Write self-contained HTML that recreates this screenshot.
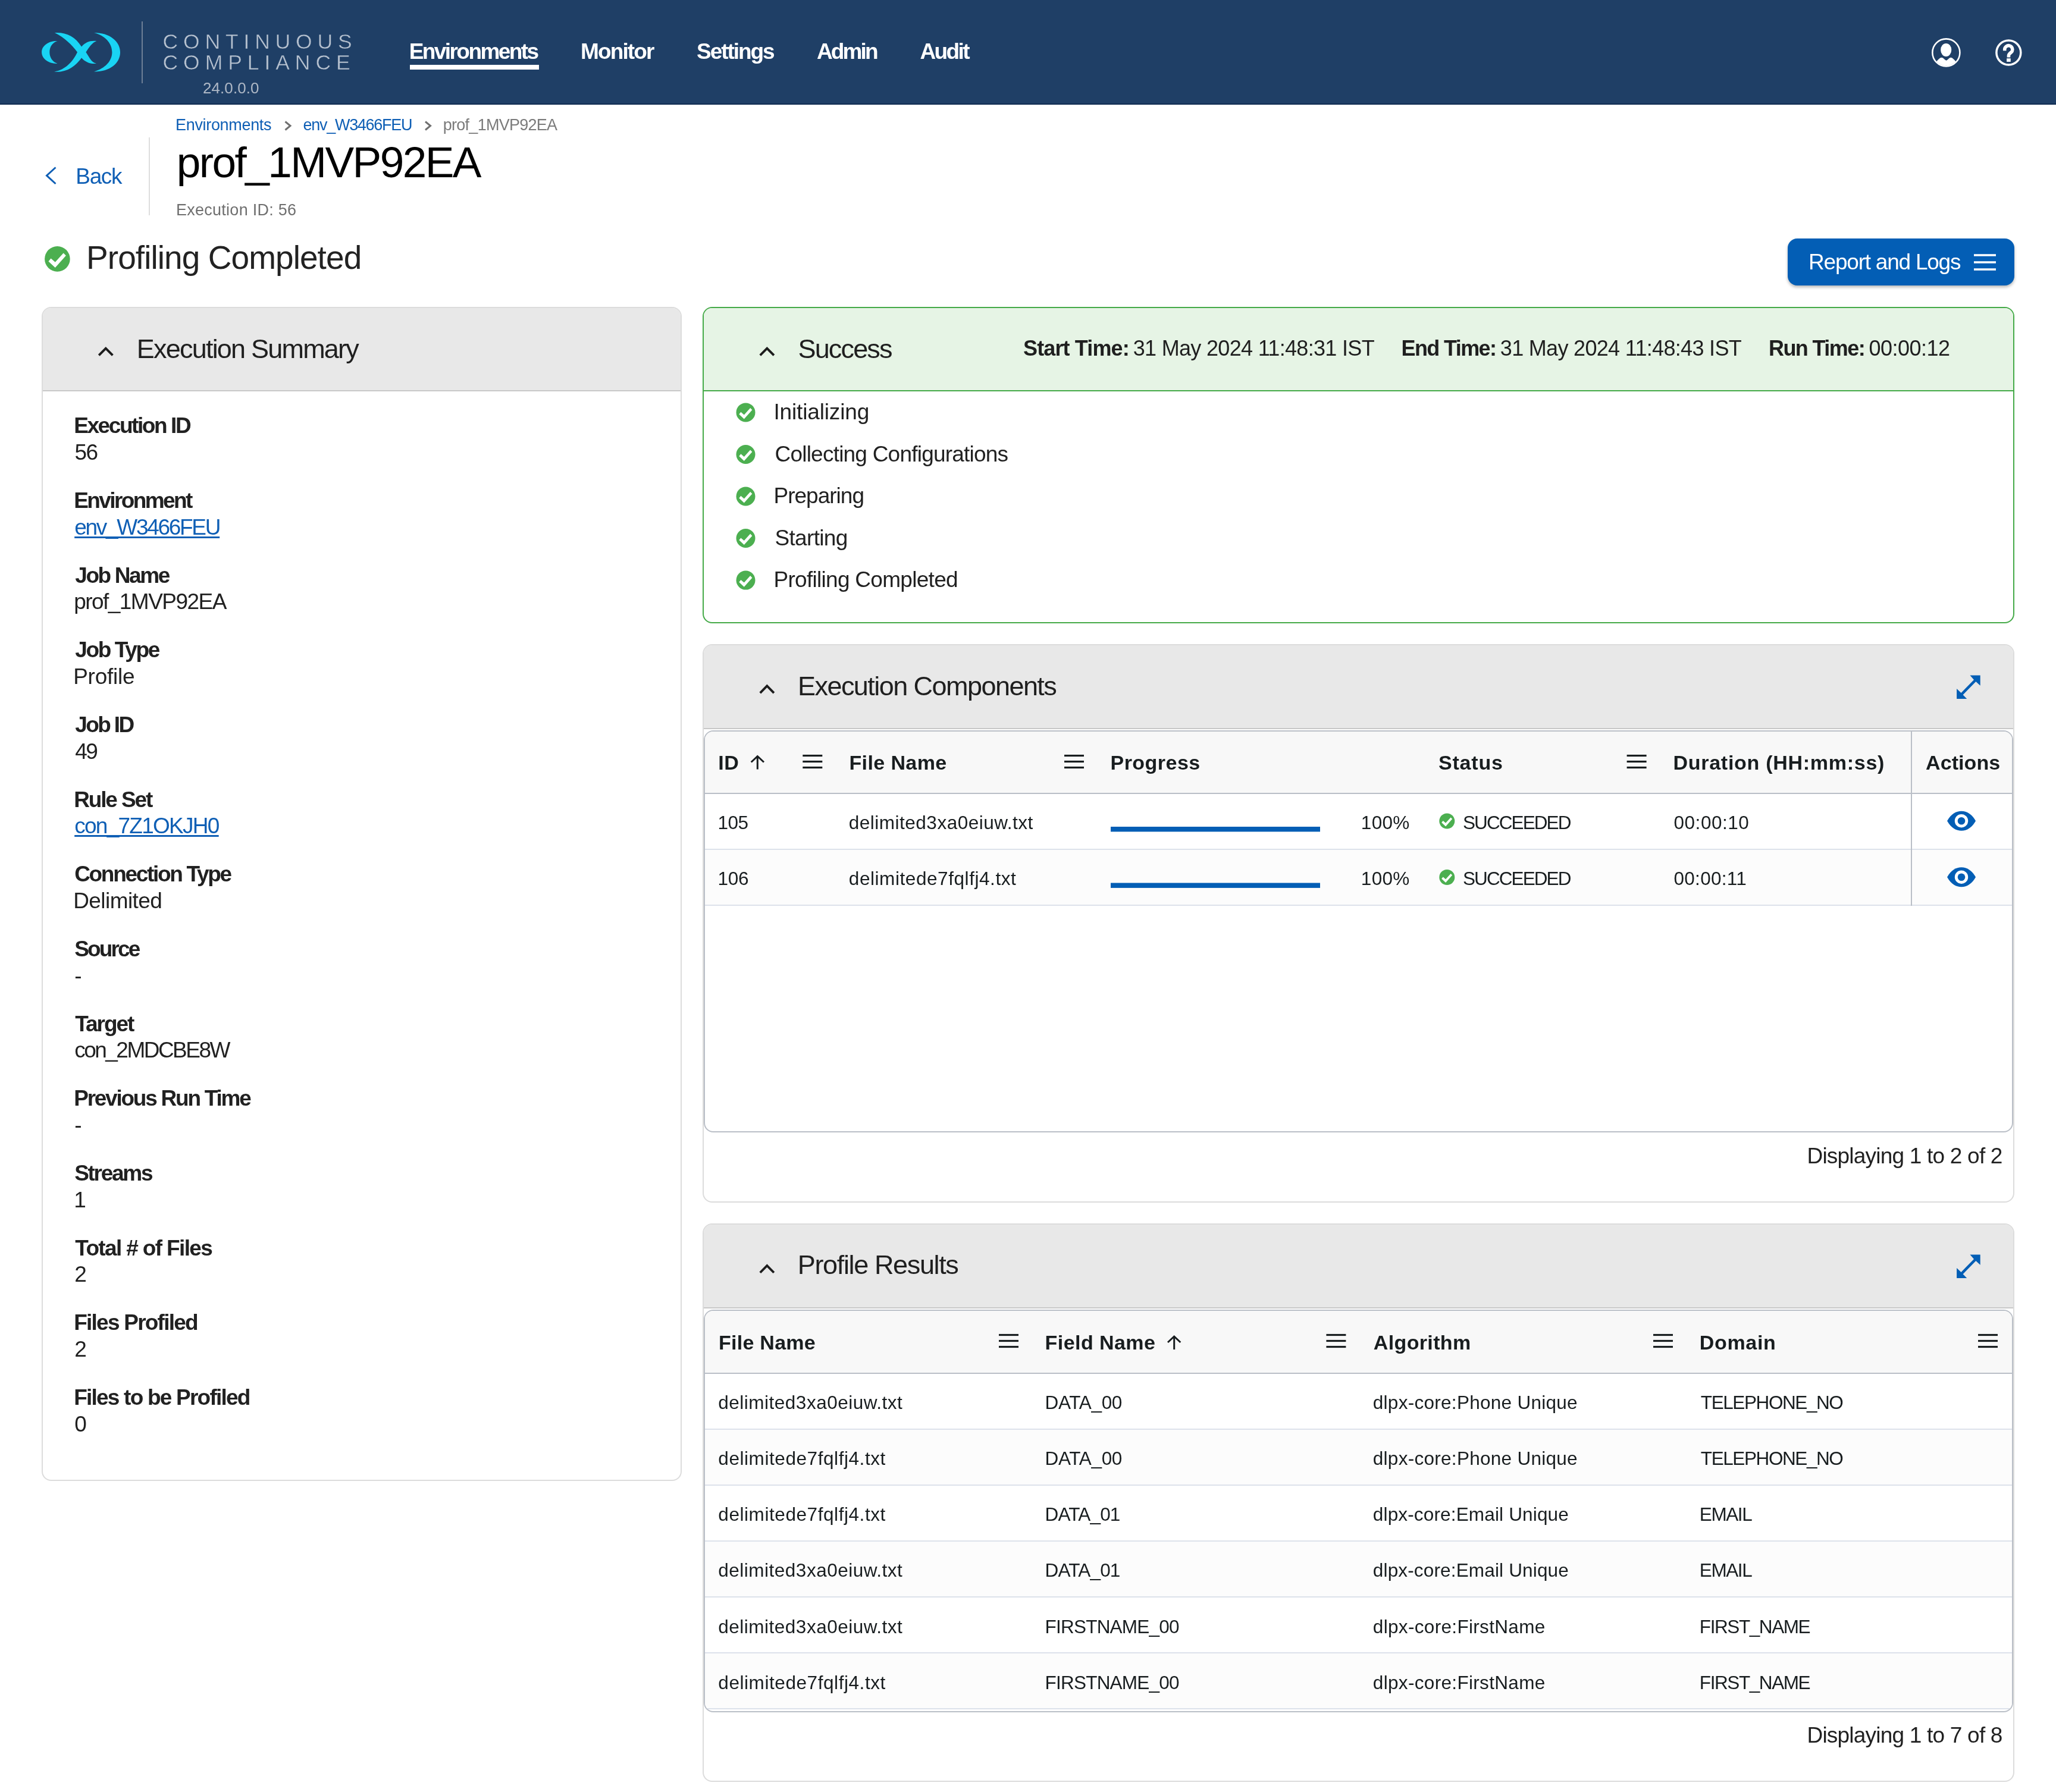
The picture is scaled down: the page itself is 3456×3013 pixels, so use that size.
<!DOCTYPE html>
<html><head><meta charset="utf-8"><title>prof_1MVP92EA</title>
<style>
html,body{margin:0;padding:0;background:#fff;width:3456px;height:3013px;overflow:hidden;position:relative}
body{font-family:"Liberation Sans",sans-serif}
.t{position:absolute;white-space:nowrap;z-index:5}
.tl{position:absolute;left:0;top:0;width:3456px;height:3013px;z-index:7;will-change:transform}
.ov{position:absolute;left:0;top:0;z-index:6}
.hdr{position:absolute;left:0;top:0;width:3456px;height:174px;background:#1f3f66;border-bottom:2px solid #112d52}
.box{position:absolute;box-sizing:border-box;border:2px solid #dcdcdc;border-radius:16px;overflow:hidden;background:#fff}
.phead{position:absolute;left:0;top:0;right:0;background:#e8e8e8;border-bottom:2px solid #c8c8c8}
.grid{position:absolute;box-sizing:border-box;border:2px solid #babfc7;border-radius:16px;overflow:hidden;background:#fff}
.gheadr{position:absolute;left:0;top:0;right:0;background:#f8f8f8;border-bottom:2px solid #babfc7}
.row{position:absolute;left:0;right:0}
.sep{position:absolute;left:0;right:0;height:2px;background:#dde2eb}
</style></head><body>
<div class="hdr"></div>
<div style="position:absolute;left:238px;top:36px;width:2px;height:104px;background:#6e7f97"></div>
<div style="position:absolute;left:689px;top:109px;width:217px;height:8px;background:#fff"></div>
<div style="position:absolute;left:250px;top:231px;width:2px;height:131px;background:#dedede"></div>
<div style="position:absolute;left:3005px;top:401px;width:381px;height:79px;border-radius:16px;background:#035eb5;box-shadow:0 3px 5px rgba(0,0,0,.28)"></div>
<div class="box" style="left:70px;top:516px;width:1076px;height:1974px;border-color:#dcdcdc"><div class="phead" style="height:138px;background:#e8e8e8;border-bottom-color:#c8c8c8"></div></div><div class="box" style="left:1181px;top:516px;width:2205px;height:532px;border-color:#45aa48"><div class="phead" style="height:138px;background:#e6f4e5;border-bottom-color:#45aa48"></div></div><div class="box" style="left:1181px;top:1083px;width:2205px;height:939px;border-color:#dcdcdc"><div class="phead" style="height:139px;background:#e8e8e8;border-bottom-color:#c8c8c8"></div></div><div class="grid" style="left:1183px;top:1228px;width:2201px;height:676px"><div class="gheadr" style="height:103px"></div><div class="row" style="top:105px;height:92px;background:#ffffff"></div><div class="sep" style="top:197px"></div><div class="row" style="top:199px;height:92px;background:#fcfcfc"></div><div class="sep" style="top:291px"></div><div style="position:absolute;left:2027px;top:0;width:2px;height:293px;background:#babfc7"></div></div><div class="box" style="left:1181px;top:2057px;width:2205px;height:939px;border-color:#dcdcdc"><div class="phead" style="height:139px;background:#e8e8e8;border-bottom-color:#c8c8c8"></div></div><div class="grid" style="left:1183px;top:2202px;width:2201px;height:677px"><div class="gheadr" style="height:104px"></div><div class="row" style="top:106px;height:92px;background:#ffffff"></div><div class="sep" style="top:198px"></div><div class="row" style="top:200px;height:92px;background:#fcfcfc"></div><div class="sep" style="top:292px"></div><div class="row" style="top:294px;height:92px;background:#ffffff"></div><div class="sep" style="top:386px"></div><div class="row" style="top:388px;height:92px;background:#fcfcfc"></div><div class="sep" style="top:480px"></div><div class="row" style="top:482px;height:92px;background:#ffffff"></div><div class="sep" style="top:574px"></div><div class="row" style="top:576px;height:92px;background:#fcfcfc"></div><div class="sep" style="top:668px"></div></div>
<svg class="ov" width="3456" height="3013" viewBox="0 0 3456 3013"><g transform="translate(60,45) scale(0.0778210)"><path fill="#19d4f4" d="M470,310 C300,300 130,400 130,550 C130,700 300,805 470,795 C360,760 300,660 300,550 C300,440 360,340 470,310 Z"/><path fill="#19d4f4" d="M1260,130 C1600,130 1825,320 1825,550 C1825,790 1600,975 1260,970 C1500,900 1650,740 1650,550 C1650,360 1500,190 1260,130 Z"/><path fill="#19d4f4" d="M410,130 C660,115 850,210 990,430 C1080,330 1180,295 1315,310 C1220,340 1150,450 1085,550 C1160,660 1200,770 1310,795 C1180,810 1070,760 990,670 C860,850 680,990 400,972 C640,930 800,760 900,550 C790,400 620,230 410,130 Z"/></g><defs><clipPath id="uc"><circle cx="3271.35" cy="88.4" r="22"/></clipPath></defs><circle cx="3271.35" cy="88.4" r="23.05" fill="none" stroke="#fff" stroke-width="2.6"/><ellipse cx="3271.2" cy="83.9" rx="9.05" ry="11" fill="#fff"/><path clip-path="url(#uc)" d="M3254.5,104.2 C3258,100 3261,96.8 3263.6,96.8 C3266.2,96.8 3269,100.6 3271.6,101.8 C3274.2,100.6 3276.9,96.8 3279.1,96.8 C3281.7,96.8 3284.6,100 3288.4,104.4 L3300,130 L3240,130 Z" fill="#fff"/><circle cx="3376.35" cy="88.45" r="20.45" fill="none" stroke="#fff" stroke-width="3.5"/><path d="M3369.7,85.2 L3369.7,82.8 A6.6,6.6 0 1 1 3382.3,86 C3381,88.6 3376.45,90 3376.45,93.5 L3376.45,96.6" fill="none" stroke="#fff" stroke-width="5.6"/><rect x="3373.1" y="98.2" width="6.7" height="5.7" fill="#fff"/><path d="M479.5,204.5 L488.0,211.5 L479.5,218.5" fill="none" stroke="#707070" stroke-width="3"/><path d="M715,204.5 L723.5,211.5 L715,218.5" fill="none" stroke="#707070" stroke-width="3"/><path d="M93.5,281.5 L78.5,295.2 L93.5,309" fill="none" stroke="#0f5fb5" stroke-width="3"/><circle cx="96.4" cy="435.4" r="21.3" fill="#4caf50"/><polygon points="81.49,439.45 85.54,434.55 92.78,440.72 106.62,425.39 110.88,429.86 92.78,450.10" fill="#fff"/><rect x="3318" y="427.25" width="37" height="3.5" fill="#fff"/><rect x="3318" y="439.25" width="37" height="3.5" fill="#fff"/><rect x="3318" y="451.25" width="37" height="3.5" fill="#fff"/><polygon points="177.8,582.9 190.8,596.1 188.0,598.8 177.8,588.5 167.6,598.8 164.9,596.1" fill="#1c1c1c"/><polygon points="1289.3,582.9 1302.3,596.1 1299.5,598.8 1289.3,588.5 1279.1,598.8 1276.4,596.1" fill="#1c1c1c"/><polygon points="1289.3,1150.5 1302.3,1163.7 1299.5,1166.4 1289.3,1156.1 1279.1,1166.4 1276.4,1163.7" fill="#1c1c1c"/><polygon points="1289.3,2125.2 1302.3,2138.4 1299.5,2141.1 1289.3,2130.8 1279.1,2141.1 1276.4,2138.4" fill="#1c1c1c"/><circle cx="1253.5" cy="693.4" r="16" fill="#4caf50"/><polygon points="1242.30,696.44 1245.34,692.76 1250.78,697.40 1261.18,685.88 1264.38,689.24 1250.78,704.44" fill="#fff"/><circle cx="1253.5" cy="763.9499999999999" r="16" fill="#4caf50"/><polygon points="1242.30,766.99 1245.34,763.31 1250.78,767.95 1261.18,756.43 1264.38,759.79 1250.78,774.99" fill="#fff"/><circle cx="1253.5" cy="834.5" r="16" fill="#4caf50"/><polygon points="1242.30,837.54 1245.34,833.86 1250.78,838.50 1261.18,826.98 1264.38,830.34 1250.78,845.54" fill="#fff"/><circle cx="1253.5" cy="905.05" r="16" fill="#4caf50"/><polygon points="1242.30,908.09 1245.34,904.41 1250.78,909.05 1261.18,897.53 1264.38,900.89 1250.78,916.09" fill="#fff"/><circle cx="1253.5" cy="975.5999999999999" r="16" fill="#4caf50"/><polygon points="1242.30,978.64 1245.34,974.96 1250.78,979.60 1261.18,968.08 1264.38,971.44 1250.78,986.64" fill="#fff"/><polygon points="3311.5,1135.6 3328.7,1135.6 3328.7,1152.8 3321.3,1146.0 3299.6,1168.2 3306.2,1175.1 3289.1,1175.1 3289.1,1157.9 3296.5,1164.9 3318.0,1143.0" fill="#035eb5"/><polygon points="3311.5,2109.6 3328.7,2109.6 3328.7,2126.8 3321.3,2120.0 3299.6,2142.2 3306.2,2149.1 3289.1,2149.1 3289.1,2131.9 3296.5,2138.9 3318.0,2117.0" fill="#035eb5"/><path d="M1273.3,1293.5 L1273.3,1272.0 M1262.7,1281.5 L1273.3,1271.5 L1284.0,1281.5" stroke="#181d1f" stroke-width="3" fill="none"/><rect x="1349.3" y="1268.90" width="33" height="3.2" fill="#181d1f"/><rect x="1349.3" y="1278.90" width="33" height="3.2" fill="#181d1f"/><rect x="1349.3" y="1288.90" width="33" height="3.2" fill="#181d1f"/><rect x="1789" y="1268.90" width="33" height="3.2" fill="#181d1f"/><rect x="1789" y="1278.90" width="33" height="3.2" fill="#181d1f"/><rect x="1789" y="1288.90" width="33" height="3.2" fill="#181d1f"/><rect x="2734.6" y="1268.90" width="33" height="3.2" fill="#181d1f"/><rect x="2734.6" y="1278.90" width="33" height="3.2" fill="#181d1f"/><rect x="2734.6" y="1288.90" width="33" height="3.2" fill="#181d1f"/><rect x="1867" y="1390.0" width="352" height="8.4" fill="#035eb5"/><circle cx="2432.3" cy="1380.5" r="13" fill="#4caf50"/><polygon points="2423.20,1382.97 2425.67,1379.98 2430.09,1383.75 2438.54,1374.39 2441.14,1377.12 2430.09,1389.47" fill="#fff"/><path d="M3273,1380.2 C3280,1368.2 3288,1363.7 3297,1363.7 C3306,1363.7 3314,1368.2 3321,1380.2 C3314,1392.2 3306,1396.7 3297,1396.7 C3288,1396.7 3280,1392.2 3273,1380.2 Z" fill="#035eb5"/><circle cx="3297" cy="1380.2" r="11.2" fill="#fff"/><circle cx="3297" cy="1380.2" r="6.3" fill="#035eb5"/><rect x="1867" y="1484.5" width="352" height="8.4" fill="#035eb5"/><circle cx="2432.3" cy="1475.0" r="13" fill="#4caf50"/><polygon points="2423.20,1477.47 2425.67,1474.48 2430.09,1478.25 2438.54,1468.89 2441.14,1471.62 2430.09,1483.97" fill="#fff"/><path d="M3273,1474.7 C3280,1462.7 3288,1458.2 3297,1458.2 C3306,1458.2 3314,1462.7 3321,1474.7 C3314,1486.7 3306,1491.2 3297,1491.2 C3288,1491.2 3280,1486.7 3273,1474.7 Z" fill="#035eb5"/><circle cx="3297" cy="1474.7" r="11.2" fill="#fff"/><circle cx="3297" cy="1474.7" r="6.3" fill="#035eb5"/><path d="M1973.7,2269.0 L1973.7,2247.5 M1963.0,2257.0 L1973.7,2247.0 L1984.3,2257.0" stroke="#181d1f" stroke-width="3" fill="none"/><rect x="1679" y="2242.90" width="33" height="3.2" fill="#181d1f"/><rect x="1679" y="2252.90" width="33" height="3.2" fill="#181d1f"/><rect x="1679" y="2262.90" width="33" height="3.2" fill="#181d1f"/><rect x="2229.4" y="2242.90" width="33" height="3.2" fill="#181d1f"/><rect x="2229.4" y="2252.90" width="33" height="3.2" fill="#181d1f"/><rect x="2229.4" y="2262.90" width="33" height="3.2" fill="#181d1f"/><rect x="2779" y="2242.90" width="33" height="3.2" fill="#181d1f"/><rect x="2779" y="2252.90" width="33" height="3.2" fill="#181d1f"/><rect x="2779" y="2262.90" width="33" height="3.2" fill="#181d1f"/><rect x="3325" y="2242.90" width="33" height="3.2" fill="#181d1f"/><rect x="3325" y="2252.90" width="33" height="3.2" fill="#181d1f"/><rect x="3325" y="2262.90" width="33" height="3.2" fill="#181d1f"/></svg>
<div class="tl">
<div class="t" style="left:273.5px;top:52.5px;font-size:35.5px;line-height:35.5px;letter-spacing:8.84px;color:#b6c1cf;-webkit-text-stroke:0.5px #1f3f66;">CONTINUOUS</div>
<div class="t" style="left:273.5px;top:87.8px;font-size:35.5px;line-height:35.5px;letter-spacing:8.94px;color:#b6c1cf;-webkit-text-stroke:0.5px #1f3f66;">COMPLIANCE</div>
<div class="t" style="left:341.0px;top:134.6px;font-size:26px;line-height:26px;letter-spacing:0.07px;color:#aeb8c6;">24.0.0.0</div>
<div class="t" style="left:687.7px;top:67.5px;font-size:37px;line-height:37px;letter-spacing:-2.57px;color:#ffffff;font-weight:700;">Environments</div>
<div class="t" style="left:976.0px;top:67.5px;font-size:37px;line-height:37px;letter-spacing:-1.87px;color:#ffffff;font-weight:700;">Monitor</div>
<div class="t" style="left:1171.0px;top:67.5px;font-size:37px;line-height:37px;letter-spacing:-2.05px;color:#ffffff;font-weight:700;">Settings</div>
<div class="t" style="left:1373.0px;top:67.5px;font-size:37px;line-height:37px;letter-spacing:-2.88px;color:#ffffff;font-weight:700;">Admin</div>
<div class="t" style="left:1546.4px;top:67.5px;font-size:37px;line-height:37px;letter-spacing:-2.58px;color:#ffffff;font-weight:700;">Audit</div>
<div class="t" style="left:295.0px;top:197.0px;font-size:27px;line-height:27px;letter-spacing:-0.32px;color:#0f5fb5;">Environments</div>
<div class="t" style="left:509.5px;top:197.0px;font-size:27px;line-height:27px;letter-spacing:-1.28px;color:#0f5fb5;">env_W3466FEU</div>
<div class="t" style="left:744.8px;top:197.0px;font-size:27px;line-height:27px;letter-spacing:-0.74px;color:#7b7b7b;">prof_1MVP92EA</div>
<div class="t" style="left:127.3px;top:277.7px;font-size:37px;line-height:37px;letter-spacing:-1.35px;color:#0f5fb5;">Back</div>
<div class="t" style="left:296.7px;top:235.7px;font-size:73px;line-height:73px;letter-spacing:-2.58px;color:#000000;">prof_1MVP92EA</div>
<div class="t" style="left:296.0px;top:339.8px;font-size:27px;line-height:27px;letter-spacing:0.26px;color:#6f6f6f;">Execution ID: 56</div>
<div class="t" style="left:145.0px;top:406.0px;font-size:55px;line-height:55px;letter-spacing:-0.93px;color:#222222;">Profiling Completed</div>
<div class="t" style="left:3040.1px;top:421.5px;font-size:37px;line-height:37px;letter-spacing:-1.23px;color:#ffffff;">Report and Logs</div>
<div class="t" style="left:229.8px;top:563.6px;font-size:45px;line-height:45px;letter-spacing:-1.79px;color:#1f1f1f;">Execution Summary</div>
<div class="t" style="left:124.2px;top:697.4px;font-size:37px;line-height:37px;letter-spacing:-2.42px;color:#212121;font-weight:700;">Execution ID</div>
<div class="t" style="left:125.5px;top:742.0px;font-size:37px;line-height:37px;letter-spacing:-1.63px;color:#212121;">56</div>
<div class="t" style="left:124.2px;top:823.1px;font-size:37px;line-height:37px;letter-spacing:-2.60px;color:#212121;font-weight:700;">Environment</div>
<div class="t" style="left:125.2px;top:867.7px;font-size:37px;line-height:37px;letter-spacing:-2.29px;color:#0f5fb5;text-decoration:underline;text-decoration-thickness:2.5px;text-underline-offset:3px;text-decoration-skip-ink:none;">env_W3466FEU</div>
<div class="t" style="left:126.2px;top:948.7px;font-size:37px;line-height:37px;letter-spacing:-2.39px;color:#212121;font-weight:700;">Job Name</div>
<div class="t" style="left:124.2px;top:993.3px;font-size:37px;line-height:37px;letter-spacing:-1.54px;color:#212121;">prof_1MVP92EA</div>
<div class="t" style="left:126.2px;top:1074.4px;font-size:37px;line-height:37px;letter-spacing:-2.36px;color:#212121;font-weight:700;">Job Type</div>
<div class="t" style="left:123.2px;top:1119.0px;font-size:37px;line-height:37px;letter-spacing:-0.25px;color:#212121;">Profile</div>
<div class="t" style="left:126.2px;top:1200.0px;font-size:37px;line-height:37px;letter-spacing:-2.61px;color:#212121;font-weight:700;">Job ID</div>
<div class="t" style="left:126.2px;top:1244.6px;font-size:37px;line-height:37px;letter-spacing:-2.48px;color:#212121;">49</div>
<div class="t" style="left:124.2px;top:1325.7px;font-size:37px;line-height:37px;letter-spacing:-2.14px;color:#212121;font-weight:700;">Rule Set</div>
<div class="t" style="left:125.2px;top:1370.3px;font-size:37px;line-height:37px;letter-spacing:-1.73px;color:#0f5fb5;text-decoration:underline;text-decoration-thickness:2.5px;text-underline-offset:3px;text-decoration-skip-ink:none;">con_7Z1OKJH0</div>
<div class="t" style="left:125.2px;top:1451.4px;font-size:37px;line-height:37px;letter-spacing:-2.32px;color:#212121;font-weight:700;">Connection Type</div>
<div class="t" style="left:123.2px;top:1496.0px;font-size:37px;line-height:37px;letter-spacing:-0.57px;color:#212121;">Delimited</div>
<div class="t" style="left:125.2px;top:1577.0px;font-size:37px;line-height:37px;letter-spacing:-2.87px;color:#212121;font-weight:700;">Source</div>
<div class="t" style="left:125.2px;top:1621.6px;font-size:37px;line-height:37px;letter-spacing:-1.63px;color:#212121;">-</div>
<div class="t" style="left:126.2px;top:1702.7px;font-size:37px;line-height:37px;letter-spacing:-2.02px;color:#212121;font-weight:700;">Target</div>
<div class="t" style="left:125.2px;top:1747.3px;font-size:37px;line-height:37px;letter-spacing:-2.52px;color:#212121;">con_2MDCBE8W</div>
<div class="t" style="left:124.2px;top:1828.3px;font-size:37px;line-height:37px;letter-spacing:-2.24px;color:#212121;font-weight:700;">Previous Run Time</div>
<div class="t" style="left:125.2px;top:1872.9px;font-size:37px;line-height:37px;letter-spacing:-1.63px;color:#212121;">-</div>
<div class="t" style="left:125.2px;top:1954.0px;font-size:37px;line-height:37px;letter-spacing:-2.29px;color:#212121;font-weight:700;">Streams</div>
<div class="t" style="left:124.2px;top:1998.6px;font-size:37px;line-height:37px;letter-spacing:-1.63px;color:#212121;">1</div>
<div class="t" style="left:126.2px;top:2079.7px;font-size:37px;line-height:37px;letter-spacing:-1.64px;color:#212121;font-weight:700;">Total # of Files</div>
<div class="t" style="left:125.2px;top:2124.3px;font-size:37px;line-height:37px;letter-spacing:-1.63px;color:#212121;">2</div>
<div class="t" style="left:124.2px;top:2205.3px;font-size:37px;line-height:37px;letter-spacing:-1.76px;color:#212121;font-weight:700;">Files Profiled</div>
<div class="t" style="left:125.2px;top:2249.9px;font-size:37px;line-height:37px;letter-spacing:-1.63px;color:#212121;">2</div>
<div class="t" style="left:124.2px;top:2331.0px;font-size:37px;line-height:37px;letter-spacing:-1.78px;color:#212121;font-weight:700;">Files to be Profiled</div>
<div class="t" style="left:125.2px;top:2375.6px;font-size:37px;line-height:37px;letter-spacing:-1.63px;color:#212121;">0</div>
<div class="t" style="left:1341.5px;top:563.6px;font-size:45px;line-height:45px;letter-spacing:-1.84px;color:#1f1f1f;">Success</div>
<div class="t" style="left:1720.0px;top:567.5px;font-size:36px;line-height:36px;letter-spacing:-0.87px;color:#1f1f1f;font-weight:700;">Start Time:</div>
<div class="t" style="left:1904.7px;top:567.5px;font-size:36px;line-height:36px;letter-spacing:-0.68px;color:#1f1f1f;">31 May 2024 11:48:31 IST</div>
<div class="t" style="left:2355.5px;top:567.5px;font-size:36px;line-height:36px;letter-spacing:-1.61px;color:#1f1f1f;font-weight:700;">End Time:</div>
<div class="t" style="left:2521.8px;top:567.5px;font-size:36px;line-height:36px;letter-spacing:-0.68px;color:#1f1f1f;">31 May 2024 11:48:43 IST</div>
<div class="t" style="left:2973.0px;top:567.5px;font-size:36px;line-height:36px;letter-spacing:-1.59px;color:#1f1f1f;font-weight:700;">Run Time:</div>
<div class="t" style="left:3141.6px;top:567.5px;font-size:36px;line-height:36px;letter-spacing:-0.53px;color:#1f1f1f;">00:00:12</div>
<div class="t" style="left:1300.5px;top:674.0px;font-size:37px;line-height:37px;letter-spacing:-0.16px;color:#212121;">Initializing</div>
<div class="t" style="left:1302.5px;top:744.5px;font-size:37px;line-height:37px;letter-spacing:-0.78px;color:#212121;">Collecting Configurations</div>
<div class="t" style="left:1300.5px;top:815.1px;font-size:37px;line-height:37px;letter-spacing:-0.99px;color:#212121;">Preparing</div>
<div class="t" style="left:1302.5px;top:885.6px;font-size:37px;line-height:37px;letter-spacing:-0.68px;color:#212121;">Starting</div>
<div class="t" style="left:1300.5px;top:956.2px;font-size:37px;line-height:37px;letter-spacing:-0.71px;color:#212121;">Profiling Completed</div>
<div class="t" style="left:1341.0px;top:1130.6px;font-size:45px;line-height:45px;letter-spacing:-1.55px;color:#1f1f1f;">Execution Components</div>
<div class="t" style="left:1207.2px;top:1264.7px;font-size:34px;line-height:34px;letter-spacing:0.65px;color:#181d1f;font-weight:700;">ID</div>
<div class="t" style="left:1427.4px;top:1264.7px;font-size:34px;line-height:34px;letter-spacing:0.40px;color:#181d1f;font-weight:700;">File Name</div>
<div class="t" style="left:1866.5px;top:1264.7px;font-size:34px;line-height:34px;letter-spacing:0.47px;color:#181d1f;font-weight:700;">Progress</div>
<div class="t" style="left:2418.0px;top:1264.7px;font-size:34px;line-height:34px;letter-spacing:0.80px;color:#181d1f;font-weight:700;">Status</div>
<div class="t" style="left:2812.5px;top:1264.7px;font-size:34px;line-height:34px;letter-spacing:0.72px;color:#181d1f;font-weight:700;">Duration (HH:mm:ss)</div>
<div class="t" style="left:3237.1px;top:1264.7px;font-size:34px;line-height:34px;letter-spacing:0.06px;color:#181d1f;font-weight:700;">Actions</div>
<div class="t" style="left:1206.5px;top:1367.8px;font-size:31.5px;line-height:31.5px;letter-spacing:-0.57px;color:#181d1f;">105</div>
<div class="t" style="left:1426.8px;top:1367.8px;font-size:31.5px;line-height:31.5px;letter-spacing:0.50px;color:#181d1f;">delimited3xa0eiuw.txt</div>
<div class="t" style="left:2287.8px;top:1367.8px;font-size:31.5px;line-height:31.5px;letter-spacing:0.31px;color:#181d1f;">100%</div>
<div class="t" style="left:2459.0px;top:1367.8px;font-size:31.5px;line-height:31.5px;letter-spacing:-1.92px;color:#181d1f;">SUCCEEDED</div>
<div class="t" style="left:2813.5px;top:1367.8px;font-size:31.5px;line-height:31.5px;letter-spacing:0.53px;color:#181d1f;">00:00:10</div>
<div class="t" style="left:1206.5px;top:1461.8px;font-size:31.5px;line-height:31.5px;letter-spacing:-0.27px;color:#181d1f;">106</div>
<div class="t" style="left:1426.8px;top:1461.8px;font-size:31.5px;line-height:31.5px;letter-spacing:0.57px;color:#181d1f;">delimitede7fqlfj4.txt</div>
<div class="t" style="left:2287.8px;top:1461.8px;font-size:31.5px;line-height:31.5px;letter-spacing:0.31px;color:#181d1f;">100%</div>
<div class="t" style="left:2459.0px;top:1461.8px;font-size:31.5px;line-height:31.5px;letter-spacing:-1.92px;color:#181d1f;">SUCCEEDED</div>
<div class="t" style="left:2813.5px;top:1461.8px;font-size:31.5px;line-height:31.5px;letter-spacing:0.29px;color:#181d1f;">00:00:11</div>
<div class="t" style="left:3037.5px;top:1925.1px;font-size:37px;line-height:37px;letter-spacing:-0.79px;color:#212121;">Displaying 1 to 2 of 2</div>
<div class="t" style="left:1340.8px;top:2104.1px;font-size:45px;line-height:45px;letter-spacing:-1.36px;color:#1f1f1f;">Profile Results</div>
<div class="t" style="left:1208.0px;top:2239.7px;font-size:34px;line-height:34px;letter-spacing:0.27px;color:#181d1f;font-weight:700;">File Name</div>
<div class="t" style="left:1756.6px;top:2239.7px;font-size:34px;line-height:34px;letter-spacing:0.44px;color:#181d1f;font-weight:700;">Field Name</div>
<div class="t" style="left:2308.8px;top:2239.7px;font-size:34px;line-height:34px;letter-spacing:0.36px;color:#181d1f;font-weight:700;">Algorithm</div>
<div class="t" style="left:2856.8px;top:2239.7px;font-size:34px;line-height:34px;letter-spacing:0.66px;color:#181d1f;font-weight:700;">Domain</div>
<div class="t" style="left:1207.3px;top:2342.7px;font-size:31.5px;line-height:31.5px;letter-spacing:0.50px;color:#181d1f;">delimited3xa0eiuw.txt</div>
<div class="t" style="left:1756.6px;top:2342.7px;font-size:31.5px;line-height:31.5px;letter-spacing:-0.35px;color:#181d1f;">DATA_00</div>
<div class="t" style="left:2307.8px;top:2342.7px;font-size:31.5px;line-height:31.5px;letter-spacing:0.28px;color:#181d1f;">dlpx-core:Phone Unique</div>
<div class="t" style="left:2858.8px;top:2342.7px;font-size:31.5px;line-height:31.5px;letter-spacing:-1.41px;color:#181d1f;">TELEPHONE_NO</div>
<div class="t" style="left:1207.3px;top:2436.9px;font-size:31.5px;line-height:31.5px;letter-spacing:0.57px;color:#181d1f;">delimitede7fqlfj4.txt</div>
<div class="t" style="left:1756.6px;top:2436.9px;font-size:31.5px;line-height:31.5px;letter-spacing:-0.35px;color:#181d1f;">DATA_00</div>
<div class="t" style="left:2307.8px;top:2436.9px;font-size:31.5px;line-height:31.5px;letter-spacing:0.28px;color:#181d1f;">dlpx-core:Phone Unique</div>
<div class="t" style="left:2858.8px;top:2436.9px;font-size:31.5px;line-height:31.5px;letter-spacing:-1.41px;color:#181d1f;">TELEPHONE_NO</div>
<div class="t" style="left:1207.3px;top:2531.1px;font-size:31.5px;line-height:31.5px;letter-spacing:0.57px;color:#181d1f;">delimitede7fqlfj4.txt</div>
<div class="t" style="left:1756.6px;top:2531.1px;font-size:31.5px;line-height:31.5px;letter-spacing:-0.86px;color:#181d1f;">DATA_01</div>
<div class="t" style="left:2307.8px;top:2531.1px;font-size:31.5px;line-height:31.5px;letter-spacing:0.16px;color:#181d1f;">dlpx-core:Email Unique</div>
<div class="t" style="left:2856.8px;top:2531.1px;font-size:31.5px;line-height:31.5px;letter-spacing:-1.40px;color:#181d1f;">EMAIL</div>
<div class="t" style="left:1207.3px;top:2625.3px;font-size:31.5px;line-height:31.5px;letter-spacing:0.50px;color:#181d1f;">delimited3xa0eiuw.txt</div>
<div class="t" style="left:1756.6px;top:2625.3px;font-size:31.5px;line-height:31.5px;letter-spacing:-0.86px;color:#181d1f;">DATA_01</div>
<div class="t" style="left:2307.8px;top:2625.3px;font-size:31.5px;line-height:31.5px;letter-spacing:0.16px;color:#181d1f;">dlpx-core:Email Unique</div>
<div class="t" style="left:2856.8px;top:2625.3px;font-size:31.5px;line-height:31.5px;letter-spacing:-1.40px;color:#181d1f;">EMAIL</div>
<div class="t" style="left:1207.3px;top:2719.5px;font-size:31.5px;line-height:31.5px;letter-spacing:0.50px;color:#181d1f;">delimited3xa0eiuw.txt</div>
<div class="t" style="left:1756.6px;top:2719.5px;font-size:31.5px;line-height:31.5px;letter-spacing:-0.79px;color:#181d1f;">FIRSTNAME_00</div>
<div class="t" style="left:2307.8px;top:2719.5px;font-size:31.5px;line-height:31.5px;letter-spacing:0.33px;color:#181d1f;">dlpx-core:FirstName</div>
<div class="t" style="left:2856.8px;top:2719.5px;font-size:31.5px;line-height:31.5px;letter-spacing:-1.41px;color:#181d1f;">FIRST_NAME</div>
<div class="t" style="left:1207.3px;top:2813.7px;font-size:31.5px;line-height:31.5px;letter-spacing:0.57px;color:#181d1f;">delimitede7fqlfj4.txt</div>
<div class="t" style="left:1756.6px;top:2813.7px;font-size:31.5px;line-height:31.5px;letter-spacing:-0.79px;color:#181d1f;">FIRSTNAME_00</div>
<div class="t" style="left:2307.8px;top:2813.7px;font-size:31.5px;line-height:31.5px;letter-spacing:0.33px;color:#181d1f;">dlpx-core:FirstName</div>
<div class="t" style="left:2856.8px;top:2813.7px;font-size:31.5px;line-height:31.5px;letter-spacing:-1.41px;color:#181d1f;">FIRST_NAME</div>
<div class="t" style="left:3037.5px;top:2898.7px;font-size:37px;line-height:37px;letter-spacing:-0.79px;color:#212121;">Displaying 1 to 7 of 8</div>
</div>
</body></html>
